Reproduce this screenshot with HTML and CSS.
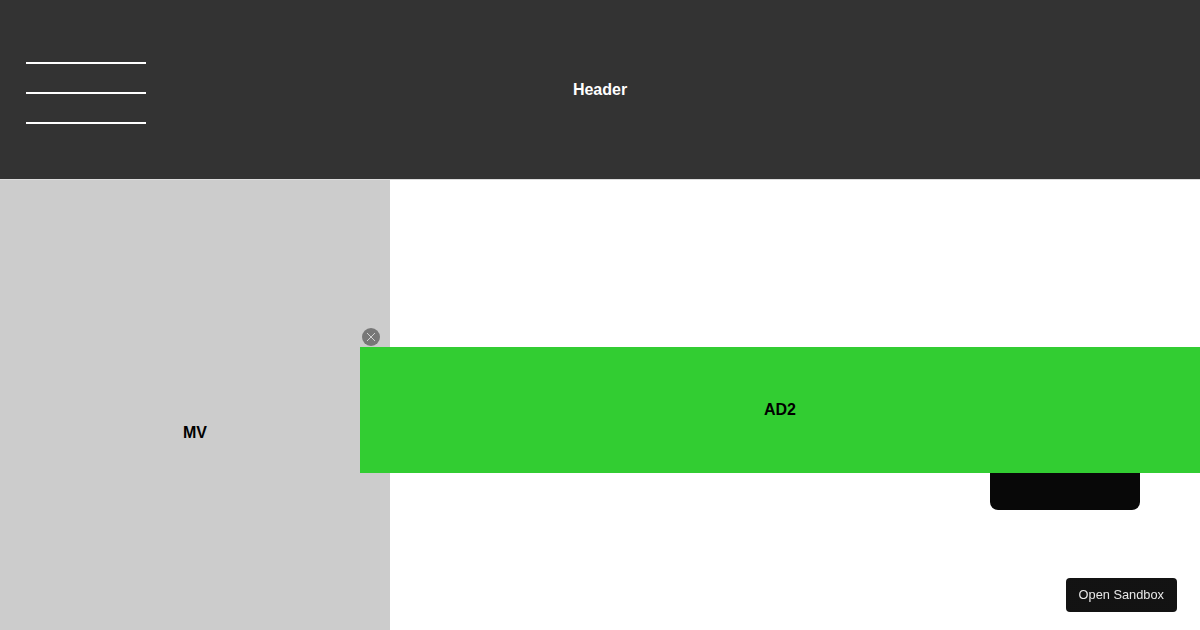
FILE: index.html
```html
<!DOCTYPE html>
<html>
    <head>
        <meta charset="utf-8" />
        <title>Ad layout</title>
        <link rel="stylesheet" href="styles.css">
    </head>
    <body>
        <div class="header">
            <div class="menu">
                <span></span>
                <span></span>
                <span></span>
            </div>
            <div class="header-title">Header</div>
        </div>
        <div class="main">
            <div class="mv">MV</div>
            <div class="content">
                <div class="ad-box"></div>
            </div>
        </div>
        <div class="ad2">
            <button type="button" class="ad2-close" aria-label="Close">
                <svg width="10" height="10" viewBox="0 0 10 10">
                    <path d="M1 1L9 9M9 1L1 9" stroke="#ddd" stroke-width="0.9" fill="none" />
                </svg>
            </button>
            <div class="ad2-label">AD2</div>
        </div>
        <a href="#" class="sandbox">Open Sandbox</a>
    </body>
</html>
```

FILE: styles.css
```css
html, body{
    margin: 0;
    height: 100%;
    overflow: hidden;
}

body{
    display: flex;
    flex-direction: column;
    background-color: #fff;
    color: #000;
    font-family: "Liberation Sans", Arial, sans-serif;
    font-size: 16px;
    font-weight: bold;
}

.header{
    display: grid;
    grid-template-columns: 1fr auto 1fr;
    align-items: center;
    height: 179px;
    background-color: #333;
    border-bottom: 1px solid #ddd;
    color: #fff;
}

.menu{
    display: flex;
    flex-direction: column;
    gap: 28px;
    width: 120px;
    margin: 7px 0 0 26px;
}

.menu span{
    height: 2px;
    background-color: #fff;
}

.main{
    display: flex;
    flex: 1;
}

.mv{
    display: flex;
    align-items: center;
    justify-content: center;
    width: 390px;
    padding-top: 55px;
    box-sizing: border-box;
    background-color: #ccc;
}

.content{
    display: flex;
    flex: 1;
    align-items: flex-end;
    justify-content: flex-end;
    padding: 0 60px 120px 0;
}

.ad-box{
    width: 150px;
    height: 150px;
    border-radius: 8px;
    background-color: #080808;
}

.ad2{
    position: fixed;
    left: 360px;
    right: 0;
    top: 347px;
    height: 126px;
    display: flex;
    align-items: center;
    justify-content: center;
    background-color: #32cd32;
}

.ad2-close{
    position: absolute;
    left: 2px;
    top: -19px;
    display: flex;
    align-items: center;
    justify-content: center;
    width: 18px;
    height: 18px;
    padding: 0;
    border: 0;
    border-radius: 50%;
    background-color: #777;
}

.sandbox{
    position: fixed;
    right: 23px;
    bottom: 18px;
    padding: 10px 13px;
    border-radius: 4px;
    background-color: #0a0a0a;
    background-image: radial-gradient(#1e1e1e 0.6px, transparent 0.8px);
    background-size: 2px 2px;
    color: #e8e8e8;
    font-size: 12.8px;
    font-weight: normal;
    line-height: 14px;
    text-decoration: none;
}
```
